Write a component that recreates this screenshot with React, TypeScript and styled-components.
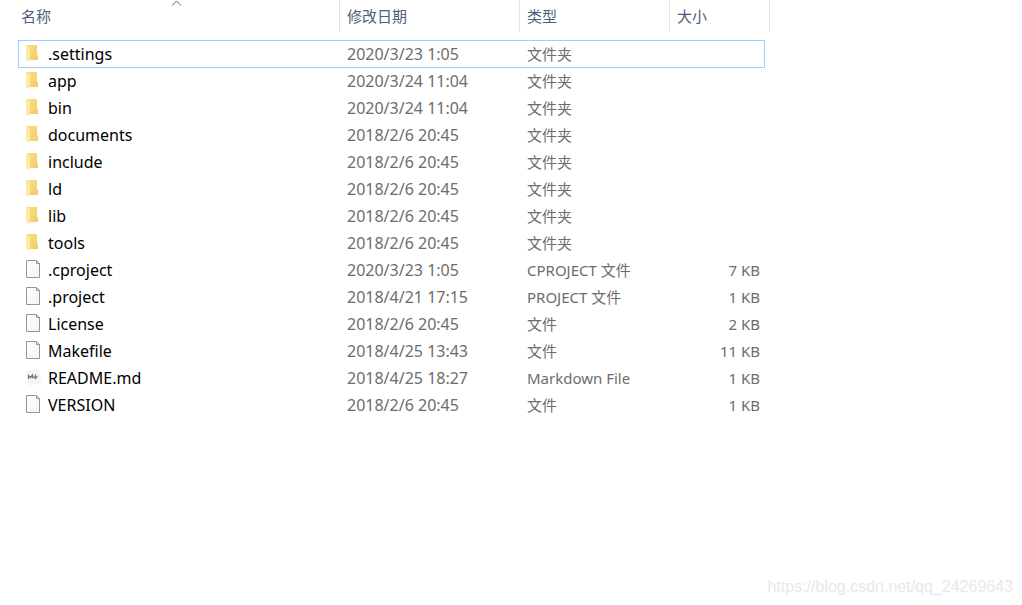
import React from "react";
import styled, { createGlobalStyle, css } from "styled-components";

const GlobalStyle = createGlobalStyle`
  body {
    margin: 0;
    background: #ffffff;
    font-family: "Noto Sans", "Noto Sans CJK SC", sans-serif;
    font-size: 15px;
    line-height: 20px;
  }
`;

type Kind = "folder" | "file" | "markdown";

interface Entry {
  name: string;
  modified: string;
  type: string;
  size?: string;
  kind: Kind;
}

const folder = (name: string, modified: string): Entry => ({
  name,
  modified,
  type: "文件夹",
  kind: "folder",
});

const entries: Entry[] = [
  folder(".settings", "2020/3/23 1:05"),
  folder("app", "2020/3/24 11:04"),
  folder("bin", "2020/3/24 11:04"),
  folder("documents", "2018/2/6 20:45"),
  folder("include", "2018/2/6 20:45"),
  folder("ld", "2018/2/6 20:45"),
  folder("lib", "2018/2/6 20:45"),
  folder("tools", "2018/2/6 20:45"),
  { name: ".cproject", modified: "2020/3/23 1:05", type: "CPROJECT 文件", size: "7 KB", kind: "file" },
  { name: ".project", modified: "2018/4/21 17:15", type: "PROJECT 文件", size: "1 KB", kind: "file" },
  { name: "License", modified: "2018/2/6 20:45", type: "文件", size: "2 KB", kind: "file" },
  { name: "Makefile", modified: "2018/4/25 13:43", type: "文件", size: "11 KB", kind: "file" },
  { name: "README.md", modified: "2018/4/25 18:27", type: "Markdown File", size: "1 KB", kind: "markdown" },
  { name: "VERSION", modified: "2018/2/6 20:45", type: "文件", size: "1 KB", kind: "file" },
];

const Page = styled.div`
  display: flex;
  flex-direction: column;
  min-height: 100vh;
`;

const ListArea = styled.main`
  flex: 1;
  padding-left: 18px;
`;

const FileTable = styled.table`
  width: 752px;
  table-layout: fixed;
  border-collapse: separate;
  border-spacing: 0;
`;

const Column = styled.col<{ $width: number }>`
  width: ${(p) => p.$width}px;
`;

const HeaderCell = styled.th<{ $first?: boolean }>`
  position: relative;
  box-sizing: border-box;
  height: 32px;
  padding: 0 0 0 ${(p) => (p.$first ? 3 : 7)}px;
  border-right: 1px solid #e5e5e5;
  color: #4c607a;
  font-weight: 400;
  text-align: left;
`;

const SortMark = styled.svg`
  position: absolute;
  top: 0;
  left: calc(50% - 8px);
`;

const Gap = styled.td`
  height: 9px;
  padding: 0;
`;

const Cell = styled.td<{ $right?: boolean }>`
  box-sizing: border-box;
  height: 27px;
  padding: 0 ${(p) => (p.$right ? 5 : 0)}px 2px 7px;
  color: #6d6d6d;
  text-align: ${(p) => (p.$right ? "right" : "left")};
  white-space: nowrap;
`;

const DateCell = styled(Cell)`
  font-size: 16px;
`;

const NameCell = styled(Cell)`
  color: #000000;
  font-size: 16px;
`;

const Row = styled.tr<{ $focused: boolean }>`
  ${(p) =>
    p.$focused &&
    css`
      ${Cell} {
        box-shadow: 0 -1px #99d1ff, inset 0 -1px #99d1ff;
      }
      ${Cell}:first-child {
        box-shadow: 0 -1px #99d1ff, inset 1px -1px #99d1ff;
      }
      ${Cell}:last-child {
        box-shadow: 0 -1px #99d1ff, inset -1px -1px #99d1ff;
      }
    `}
`;

const NameContent = styled.span`
  display: flex;
  align-items: center;
  gap: 7px;
`;

const Icon = styled.svg`
  flex: none;
  display: block;
`;

const Footer = styled.footer`
  display: flex;
  justify-content: flex-end;
  padding: 0 9px 8px 0;
`;

const SourceLink = styled.a`
  color: #e8e8e8;
  font-family: "Liberation Sans", sans-serif;
  font-size: 16px;
  text-decoration: none;
`;

function EntryIcon({ kind }: { kind: Kind }) {
  if (kind === "folder") {
    return (
      <Icon width="16" height="20" viewBox="0 0 16 20" aria-hidden="true">
        <defs>
          <linearGradient id="folderBack" x1="0" y1="0" x2="1" y2="1">
            <stop offset="0" stopColor="#fbdf85" />
            <stop offset="1" stopColor="#f0cc68" />
          </linearGradient>
        </defs>
        <path d="M1 1H12V11H13V16H1Z" fill="url(#folderBack)" />
        <path d="M1 1L5 3.5V15L4 18L1 16Z" fill="#ffe9a6" />
      </Icon>
    );
  }
  if (kind === "markdown") {
    return (
      <Icon width="16" height="20" viewBox="0 0 16 20" aria-hidden="true">
        <path d="M1 3L14 1L16 15.5L3 17.5Z" fill="#f5f5f5" />
        <path d="M3.5 11V7.5L5.5 9.5L7.5 7V10.5" stroke="#777777" strokeWidth="1.3" fill="none" />
        <path d="M10.5 6.5V10.5M8.5 8.5L10.5 10.5L12.5 8" stroke="#777777" strokeWidth="1.2" fill="none" />
      </Icon>
    );
  }
  return (
    <Icon width="16" height="20" viewBox="0 0 16 20" aria-hidden="true">
      <defs>
        <linearGradient id="paper" x1="0" y1="0" x2="1" y2="1">
          <stop offset="0" stopColor="#ffffff" />
          <stop offset="1" stopColor="#f1f3f4" />
        </linearGradient>
      </defs>
      <path d="M1.5 0.5H11.5L14.5 3.5V17.5H1.5Z" fill="url(#paper)" stroke="#959595" />
      <path d="M11.5 0.5V3.5H14.5" fill="none" stroke="#959595" />
    </Icon>
  );
}

export default function App() {
  return (
    <Page>
      <GlobalStyle />
      <ListArea>
        <FileTable>
          <colgroup>
            <Column $width={322} />
            <Column $width={180} />
            <Column $width={150} />
            <Column $width={95} />
            <Column $width={5} />
          </colgroup>
          <thead>
            <tr>
              <HeaderCell $first scope="col" aria-sort="ascending">
                名称
                <SortMark width="11" height="7" viewBox="0 0 11 7" aria-hidden="true">
                  <path d="M1 5.5L5.5 1L10 5.5" fill="none" stroke="#5f5f5f" />
                </SortMark>
              </HeaderCell>
              <HeaderCell scope="col">修改日期</HeaderCell>
              <HeaderCell scope="col">类型</HeaderCell>
              <HeaderCell scope="col" colSpan={2}>
                大小
              </HeaderCell>
            </tr>
          </thead>
          <tbody>
            <tr>
              <Gap colSpan={5} />
            </tr>
            {entries.map((entry, index) => (
              <Row key={entry.name} $focused={index === 0}>
                <NameCell>
                  <NameContent>
                    <EntryIcon kind={entry.kind} />
                    {entry.name}
                  </NameContent>
                </NameCell>
                <DateCell>{entry.modified}</DateCell>
                <Cell>{entry.type}</Cell>
                <Cell $right>{entry.size}</Cell>
              </Row>
            ))}
          </tbody>
        </FileTable>
      </ListArea>
      <Footer>
        <SourceLink href="https://blog.csdn.net/qq_24269643">https://blog.csdn.net/qq_24269643</SourceLink>
      </Footer>
    </Page>
  );
}
